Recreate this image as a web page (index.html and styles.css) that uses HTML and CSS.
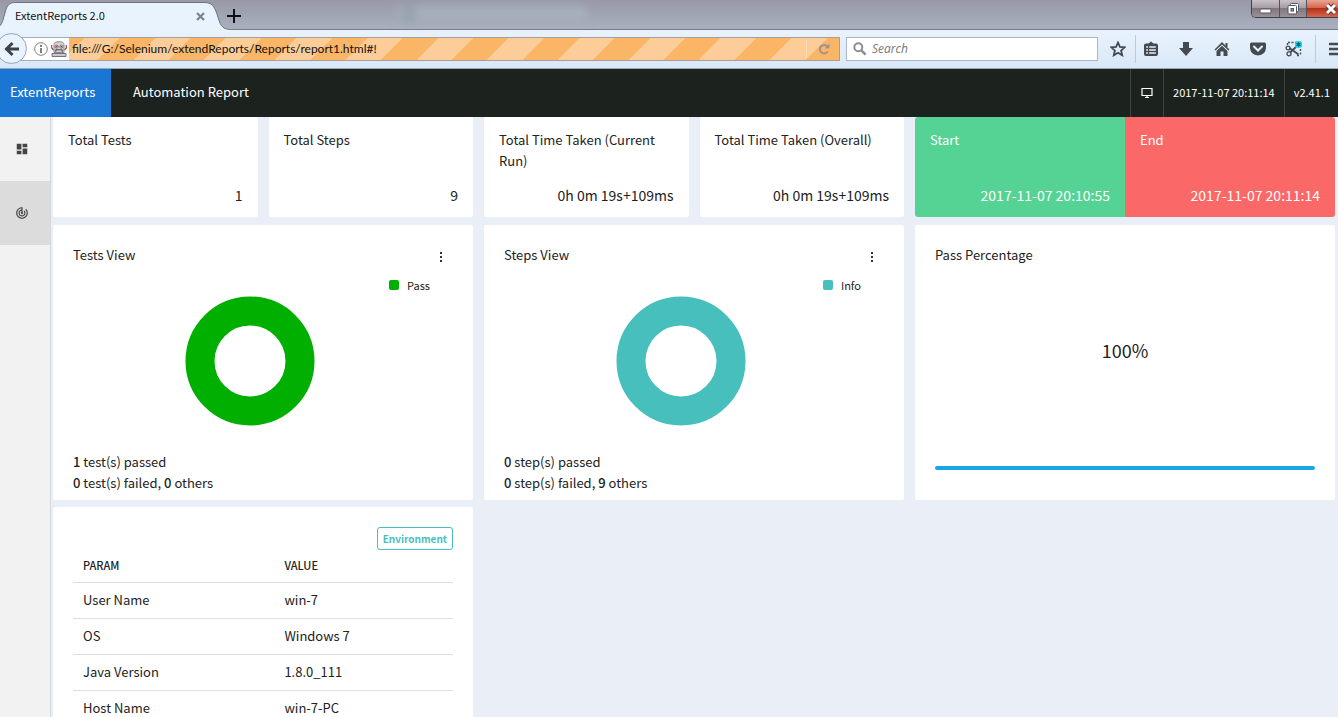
FILE: index.html
```
<!DOCTYPE html>
<html lang="en">
<head>
<meta charset="utf-8">
<title>ExtentReports 2.0</title>
<link rel="stylesheet" href="styles.css">
</head>
<body>
<div class="window">
  <div class="tabstrip">
    <div class="tab">
      <svg class="tab-shape" width="230" height="30" viewBox="0 0 230 30" aria-hidden="true"><path d="M-8 30C3 27 2 22 5 13C7 5 9 2.500 16 2.500H204C212 2.500 214 6 217 14C220 24 221 29.500 231 29.500V31H-8Z" fill="#e9f3fd" stroke="#6f747c"/></svg>
      <span class="tab-title">ExtentReports 2.0</span>
      <button class="plain tab-close" aria-label="Close tab"><svg width="9" height="9" viewBox="0 0 9 9"><path d="M1 1L8 8M8 1L1 8" stroke="#7d838a" stroke-width="2.200"/></svg></button>
    </div>
    <button class="plain new-tab" aria-label="New tab"><svg width="14" height="14" viewBox="0 0 14 14"><path d="M7 0V14M0 7H14" stroke="#111" stroke-width="2"/></svg></button>
    <div class="ghost-tab"><i></i></div>
    <div class="window-buttons">
      <button class="plain wbtn" aria-label="Minimize"><svg width="13" height="6" viewBox="0 0 13 6"><rect x="1" y="1" width="11" height="4" rx="1" fill="#fff" stroke="#545563"/></svg></button>
      <button class="plain wbtn" aria-label="Restore"><svg width="13" height="13" viewBox="0 0 13 13"><rect x="3.500" y="1.500" width="8" height="8" rx="1" fill="#fff" stroke="#545563"/><rect x="1" y="3.500" width="8.500" height="8.500" rx="1" fill="#fff" stroke="#545563"/><rect x="4" y="6.500" width="2.500" height="2.500" fill="#999" stroke="#545563"/></svg></button>
      <button class="plain wbtn wclose" aria-label="Close"><svg width="12" height="12" viewBox="0 0 12 12"><path d="M2 2L10 10M10 2L2 10" stroke="#5c3540" stroke-width="5"/><path d="M2 2L10 10M10 2L2 10" stroke="#fff" stroke-width="3"/></svg></button>
    </div>
  </div>

  <div class="toolbar">
    <div class="urlbar">
      <button class="plain back" aria-label="Back"><svg width="16" height="16" viewBox="0 0 16 16"><path d="M15 8H3M8.500 2L2.500 8L8.500 14" fill="none" stroke="#3d4248" stroke-width="3"/></svg></button>
      <div class="identity">
        <svg width="14" height="14" viewBox="0 0 14 14"><circle cx="7" cy="7" r="6.300" fill="#fff" stroke="#808080"/><path d="M7 6V11" stroke="#555" stroke-width="1.500"/><circle cx="7" cy="3.900" r="1" fill="#555"/></svg>
        <svg width="16" height="16" viewBox="0 0 16 16"><path d="M.7 4V7L2.500 9M15.300 4V7L13.500 9" fill="none" stroke="#a8443f" stroke-width="1.200"/><path d="M3 11.500V3.500Q3 .700 8 .700T13 3.500V11.500Z" fill="#d6d3d8" stroke="#8b8790"/><circle cx="5.700" cy="5.700" r="1.500" fill="#fff" stroke="#555" stroke-width=".8"/><circle cx="10.300" cy="5.700" r="1.500" fill="#fff" stroke="#555" stroke-width=".8"/><circle cx="5.700" cy="5.700" r=".8" fill="#b01616"/><circle cx="10.300" cy="5.700" r=".8" fill="#b01616"/><path d="M4.800 10.800V8.800H11.200V10.800" fill="none" stroke="#444"/><path d="M1 15.500V12.500H15V15.500Z" fill="#c9c6cd" stroke="#77737c"/></svg>
      </div>
      <input class="address" type="text" aria-label="Address" value="file:///G:/Selenium/extendReports/Reports/report1.html#!">
      <button class="plain reload" aria-label="Reload"><svg width="12" height="12" viewBox="0 0 12 12"><path d="M9.500 3.500A4.300 4.300 0 1 0 9.800 8.500" fill="none" stroke="#a0938c" stroke-width="2"/><path d="M11.500 .5V5.500H6.500Z" fill="#a0938c"/></svg></button>
    </div>
    <div class="search">
      <svg width="14" height="14" viewBox="0 0 14 14" aria-hidden="true"><circle cx="5.300" cy="5.300" r="4" fill="none" stroke="#8f8f8f" stroke-width="2"/><path d="M8.300 8.300L12.600 12.600" stroke="#8f8f8f" stroke-width="2.600"/></svg>
      <input type="text" aria-label="Search" placeholder="Search">
    </div>
    <div class="tools">
      <button class="plain tool" aria-label="Bookmark"><svg width="16" height="16" viewBox="0 0 16 16"><path d="M8 1.500L9.900 5.900L14.700 6.300L11.100 9.500L12.200 14.300L8 11.800L3.800 14.300L4.900 9.500L1.300 6.300L6.100 5.900Z" fill="none" stroke="#444a50" stroke-width="1.800"/></svg></button>
      <button class="plain tool ruled" aria-label="Bookmarks list"><svg width="16" height="16" viewBox="0 0 16 16"><path d="M3 2.500H5.500L8 .500L10.500 2.500H13Q15 2.500 15 4.500V13Q15 15 13 15H3Q1 15 1 13V4.500Q1 2.500 3 2.500Z" fill="#444a50"/><path d="M3.200 6H5M6.200 6H12.800M3.200 9H5M6.200 9H12.800M3.200 12H5M6.200 12H12.800" stroke="#e6f0fa" stroke-width="1.600"/></svg></button>
      <button class="plain tool" aria-label="Downloads"><svg width="16" height="16" viewBox="0 0 16 16"><path d="M5 1H11V7H15L8 15L1 7H5Z" fill="#444a50"/></svg></button>
      <button class="plain tool" aria-label="Home"><svg width="16" height="16" viewBox="0 0 16 16"><path d="M8 1L15.500 8.500L14.500 9.500L8 3.500L1.500 9.500L.5 8.500Z" fill="#444a50"/><path d="M11.500 2H13.500V6H11.500ZM8 4.800L13.500 10V15H9.500V10.500H6.500V15H2.500V10Z" fill="#444a50"/></svg></button>
      <button class="plain tool" aria-label="Pocket"><svg width="16" height="16" viewBox="0 0 16 16"><path d="M1.500 1.500H14.500Q16 1.500 16 3V7Q15.500 14 8 14.500Q.5 14 0 7V3Q0 1.500 1.500 1.500Z" fill="#444a50"/><path d="M4 5.500L8 9.500L12 5.500" fill="none" stroke="#e6f0fa" stroke-width="2" stroke-linecap="round"/></svg></button>
      <button class="plain tool" aria-label="Screenshot"><svg width="18" height="16" viewBox="0 0 18 16"><path d="M3 1.500H11M2.500 2V5M15.500 8V14M14 14.500H11" fill="none" stroke="#444a50" stroke-width="1.300" stroke-dasharray="2 1.500"/><path d="M4.500 7L13.500 13.500M11 6L5 11.500" stroke="#444a50" stroke-width="1.800"/><circle cx="3" cy="7" r="1.900" fill="none" stroke="#444a50" stroke-width="1.300"/><circle cx="4" cy="12.800" r="2" fill="none" stroke="#444a50" stroke-width="1.300"/><rect x="10" y="0" width="7" height="7" rx="2.500" fill="#12dff0"/><path d="M13.500 1.200V5.800M11.500 2.400L15.500 4.600M15.500 2.400L11.500 4.600" stroke="#125b73" stroke-width="1.200"/></svg></button>
      <button class="plain tool menu" aria-label="Menu"><svg width="16" height="14" viewBox="0 0 16 14"><path d="M1 2H16M1 7H16M1 12H16" stroke="#444a50" stroke-width="2.600"/></svg></button>
    </div>
  </div>

  <header class="nav">
    <a class="brand" href="#">ExtentReports</a>
    <span class="report-name">Automation Report</span>
    <button class="plain nav-cell" aria-label="Theme"><svg width="12" height="12" viewBox="0 0 12 12"><path d="M1 1.500H11V8.500H1ZM4 10.500H8M6 8.500V10.500" fill="none" stroke="#fff" stroke-width="1.200"/></svg></button>
    <span class="nav-cell">2017-11-07 20:11:14</span>
    <span class="nav-cell">v2.41.1</span>
  </header>

  <div class="body">
    <nav class="sidebar">
      <a href="#" aria-label="Tests"><svg width="14" height="14" viewBox="0 0 24 24"><path d="M3 13h8V3H3v10zm0 8h8v-6H3v6zm10 0h8V11h-8v10zm0-18v6h8V3h-8z" fill="#444"/></svg></a>
      <a href="#" class="active" aria-label="Dashboard"><svg width="14" height="14" viewBox="0 0 24 24"><path d="M19.070 4.930l-1.410 1.410C19.100 7.790 20 9.790 20 12c0 4.420-3.580 8-8 8s-8-3.580-8-8c0-4.080 3.050-7.440 7-7.930v2.020C8.160 6.570 6 9.030 6 12c0 3.310 2.690 6 6 6s6-2.690 6-6c0-1.660-.67-3.160-1.760-4.240l-1.410 1.410C15.550 9.900 16 10.900 16 12c0 2.210-1.790 4-4 4s-4-1.790-4-4c0-1.860 1.280-3.410 3-3.860v2.140c-.6.350-1 .98-1 1.720 0 1.100.9 2 2 2s2-.9 2-2c0-.74-.4-1.380-1-1.720V2h-1C6.480 2 2 6.480 2 12s4.480 10 10 10 10-4.480 10-10c0-2.760-1.120-5.260-2.930-7.070z" fill="#444"/></svg></a>
    </nav>

    <main class="dashboard">
      <div class="columns stats">
        <div class="pair">
          <section class="card stat"><span>Total Tests</span><span class="value">1</span></section>
          <section class="card stat"><span>Total Steps</span><span class="value">9</span></section>
        </div>
        <div class="pair">
          <section class="card stat"><span>Total Time Taken (Current Run)</span><span class="value">0h 0m 19s+109ms</span></section>
          <section class="card stat"><span>Total Time Taken (Overall)</span><span class="value">0h 0m 19s+109ms</span></section>
        </div>
        <div class="pair joined">
          <section class="stat start"><span>Start</span><span class="value">2017-11-07 20:10:55</span></section>
          <section class="stat end"><span>End</span><span class="value">2017-11-07 20:11:14</span></section>
        </div>
      </div>

      <div class="columns">
        <section class="card panel">
          <div class="panel-head"><span>Tests View</span><button class="plain more" aria-label="More"><svg width="4" height="12" viewBox="0 0 4 12"><path d="M1 1h2v2H1zM1 5h2v2H1zM1 9h2v2H1z" fill="#333"/></svg></button></div>
          <div class="legend"><i class="swatch pass"></i>Pass</div>
          <svg class="donut" width="130" height="130" viewBox="0 0 130 130"><circle cx="65" cy="65" r="50" fill="none" stroke="#00af00" stroke-width="29"/></svg>
          <p><b>1</b> test(s) passed<br><b>0</b> test(s) failed, <b>0</b> others</p>
        </section>
        <section class="card panel">
          <div class="panel-head"><span>Steps View</span><button class="plain more" aria-label="More"><svg width="4" height="12" viewBox="0 0 4 12"><path d="M1 1h2v2H1zM1 5h2v2H1zM1 9h2v2H1z" fill="#333"/></svg></button></div>
          <div class="legend"><i class="swatch info"></i>Info</div>
          <svg class="donut" width="130" height="130" viewBox="0 0 130 130"><circle cx="65" cy="65" r="50" fill="none" stroke="#46bfbd" stroke-width="29"/></svg>
          <p><b>0</b> step(s) passed<br><b>0</b> step(s) failed, <b>9</b> others</p>
        </section>
        <section class="card panel percentage">
          <div class="panel-head"><span>Pass Percentage</span></div>
          <span class="percent">100%</span>
          <progress class="bar" value="100" max="100" aria-label="Pass Percentage"></progress>
        </section>
        <section class="card environment">
          <span class="badge">Environment</span>
          <table>
            <thead><tr><th>PARAM</th><th>VALUE</th></tr></thead>
            <tbody>
              <tr><td>User Name</td><td>win-7</td></tr>
              <tr><td>OS</td><td>Windows 7</td></tr>
              <tr><td>Java Version</td><td>1.8.0_111</td></tr>
              <tr><td>Host Name</td><td>win-7-PC</td></tr>
            </tbody>
          </table>
        </section>
      </div>
    </main>
  </div>
</div>
</body>
</html>
```
FILE: styles.css
```
* { box-sizing: border-box; }
body {
  margin: 0;
  font: 13px/21px "Noto Sans CJK SC", "Open Sans", sans-serif;
  color: #222;
}
a { color: inherit; text-decoration: none; }
svg { display: block; flex: none; }
.plain {
  display: flex;
  align-items: center;
  justify-content: center;
  flex: none;
  padding: 0;
  border: 0;
  background: none;
}
.window { display: flex; flex-direction: column; height: 100vh; overflow: hidden; }

/* tab strip */
.tabstrip {
  display: flex;
  flex: none;
  height: 30px;
  border-bottom: 1px solid #777d86;
  background: linear-gradient(#9a98a6, #9fa5b3 50%, #aab0bd);
}
.tab { position: relative; display: flex; align-items: center; width: 221px; height: 30px; padding: 2px 16px 0 15px; }
.tab-shape { position: absolute; left: 0; top: 0; }
.tab-title { position: relative; flex: 1; padding-bottom: 2px; font-size: 11px; color: #111; }
.tab-close { position: relative; }
.new-tab { width: 26px; padding-top: 3px; }
.ghost-tab { width: 190px; margin: 6px auto 6px 150px; padding-left: 6px; background: #a6afbb; filter: blur(5px); }
.ghost-tab i { display: block; width: 12px; height: 16px; background: #93a1ac; }
.window-buttons { display: flex; flex: none; height: 18px; border: solid #41414d; border-width: 0 0 1px 1px; border-bottom-left-radius: 5px; overflow: hidden; }
.wbtn { width: 27px; border-right: 1px solid #55525c; background: linear-gradient(#c9c2c7, #a79da5 45%, #82777f 50%, #9b9098); }
.wbtn:first-child { padding-top: 4px; width: 28px; }
.wclose { width: 31px; padding-left: 17px; border-right: 0; background: linear-gradient(#e8a693, #d4674e 45%, #b93018 50%, #d4674e); }

/* toolbar */
.toolbar {
  display: flex;
  align-items: center;
  flex: none;
  height: 39px;
  border-bottom: 1px solid #9aa7b5;
  background: linear-gradient(#e9f3fd, #d9e7f7);
}
.urlbar { display: flex; flex: 1; height: 24px; }
.back {
  z-index: 1;
  width: 31px;
  height: 31px;
  margin: -4px 0 0 -4px;
  border: 1px solid #95a5b7;
  border-radius: 50%;
  background: #e9f3fd;
}
.identity {
  display: flex;
  align-items: center;
  gap: 3px;
  margin-left: -8px;
  padding: 0 2px 0 15px;
  border: solid #a3adb8;
  border-width: 1px 0;
  background: #fff;
}
.address {
  flex: 1;
  min-width: 0;
  margin-right: -34px;
  padding: 0 40px 0 3px;
  border: 1px solid #a79e97;
  border-left: 0;
  background: repeating-linear-gradient(135deg, #fab666 0 11px, #fccd98 11px 36px, #fab666 36px 50px);
  font: 12px/20px Lato, "Open Sans", sans-serif;
  color: #111;
}
.reload { width: 34px; height: 18px; margin-top: 3px; border-left: 1px solid #fce0be; }
.search {
  display: flex;
  align-items: center;
  gap: 5px;
  width: 252px;
  height: 24px;
  margin: 0 3px 0 6px;
  padding-left: 6px;
  border: 1px solid #a9b6c4;
  background: #fff;
}
.search input { flex: 1; min-width: 0; padding: 0; border: 0; font: italic 12px/20px "Open Sans", sans-serif; }
.search input::placeholder { color: #777; }
.tools { display: flex; flex: none; height: 28px; }
.tool { width: 36px; }
.tool:first-child { width: 34px; }
.ruled { width: 33px; padding-right: 3px; border-left: 1px solid #bccbdc; }
.menu { width: 23px; margin-left: 3px; padding-left: 12px; justify-content: flex-start; overflow: hidden; border-left: 1px solid #bccbdc; }

/* report header */
.nav { display: flex; flex: none; height: 48px; line-height: 46px; background: #1c231f; color: #fff; }
.brand { width: 111px; padding-left: 10px; background: #1976d2; }
.report-name { flex: 1; padding-left: 22px; }
.nav-cell { padding: 0 9px; border-left: 1px solid #3e4541; font-size: 11px; }
.nav-cell:last-child { padding-right: 8px; }
button.nav-cell { width: 33px; }

.body { display: flex; flex: 1; min-height: 0; }
.sidebar { flex: none; width: 51px; border-right: 1px solid #d5d7dc; background: #f2f2f2; }
.sidebar a { display: flex; align-items: center; justify-content: center; height: 64px; padding: 0 6px 0 0; }
.sidebar .active { background: #dcdcdc; }

/* dashboard */
.dashboard { flex: 1; padding: 0 3px 0 2px; background: #eaeef6; }
.columns { display: grid; grid-template-columns: repeat(3, 1fr); gap: 7px 11px; }
.stats { margin-bottom: 8px; }
.pair { display: grid; grid-template-columns: 1fr 1fr; gap: 11px; }
.joined { gap: 0; border-radius: 3px; overflow: hidden; color: #fff; }
.card { border-radius: 2px; background: #fff; }
.stat { display: flex; flex-direction: column; justify-content: space-between; min-height: 100px; padding: 12px 15px 11px; }
.value { text-align: right; font-size: 14px; }
.start { background: #55d394; }
.end { background: #fa6868; }

.panel { display: flex; flex-direction: column; min-height: 275px; padding: 19px 20px 7px; }
.panel-head { display: flex; justify-content: space-between; }
.more { width: 24px; padding-top: 4px; }
.legend { display: flex; align-items: center; justify-content: flex-end; gap: 8px; margin: 10px 23px 0 0; line-height: 20px; font-size: 11px; }
.swatch { width: 10px; height: 10px; border-radius: 2px; }
.pass { background: #00af00; }
.info { background: #46bfbd; }
.donut { align-self: center; margin: 1px 27px 0 0; }
.panel p { margin: auto 0 0; }
.panel b { font-weight: 500; }
.percentage { padding-bottom: 30px; }
.percent { margin: auto; padding-bottom: 30px; font-size: 18px; }
.bar { width: 100%; height: 4px; border: 0; border-radius: 2px; overflow: hidden; appearance: none; background: #ddd; }
.bar::-webkit-progress-bar { background: #ddd; }
.bar::-webkit-progress-value { background: #17a8e3; }

.environment { display: flex; flex-direction: column; padding: 20px; }
.badge { align-self: flex-end; padding: 0 5px; border: 1px solid #46bfbd; border-radius: 3px; font-size: 10px; font-weight: 700; color: #46bfbd; }
table { width: 100%; border-collapse: collapse; table-layout: fixed; }
th, td { height: 36px; padding: 0 10px 2px; border-bottom: 1px solid #ddd; text-align: left; }
th { height: 32px; padding-bottom: 0; font-size: 11px; font-weight: 500; }
th:first-child { width: 53%; }
```
